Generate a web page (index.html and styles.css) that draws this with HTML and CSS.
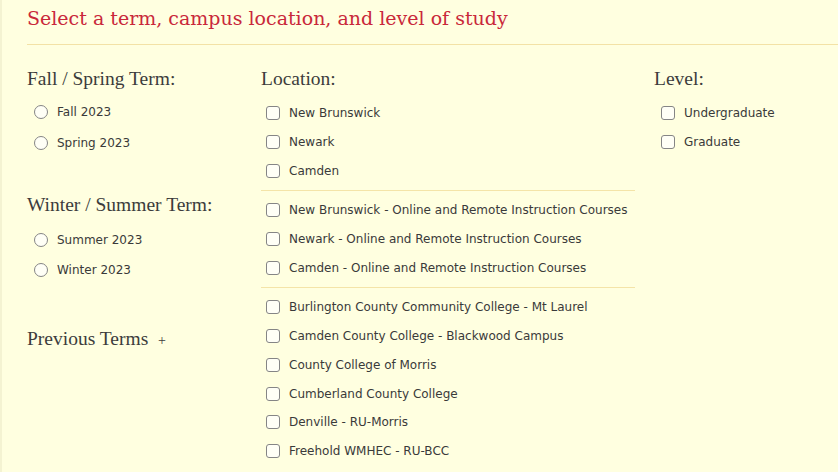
FILE: index.html
```html
<!DOCTYPE html>
<html lang="en">
<head>
<meta charset="utf-8">
<title>Select term</title>
<link rel="stylesheet" href="styles.css">
</head>
<body>
<div class="page">
  <div class="header">
    <h1 class="title">Select a term, campus location, and level of study</h1>
  </div>
  <div class="columns">
    <div class="col col-term">
      <div class="group">
        <div class="group-title">Fall / Spring Term:</div>
        <label class="opt radio-opt"><input type="radio" name="term" class="radio"><span>Fall 2023</span></label>
        <label class="opt radio-opt"><input type="radio" name="term" class="radio"><span>Spring 2023</span></label>
      </div>
      <div class="group group-winter">
        <div class="group-title">Winter / Summer Term:</div>
        <label class="opt radio-opt"><input type="radio" name="term" class="radio"><span>Summer 2023</span></label>
        <label class="opt radio-opt"><input type="radio" name="term" class="radio"><span>Winter 2023</span></label>
      </div>
      <div class="group group-prev">
        <div class="group-title">Previous Terms <span class="plus">+</span></div>
      </div>
    </div>
    <div class="col col-loc">
      <div class="group-title">Location:</div>
      <div class="loc-set">
        <label class="opt"><input type="checkbox" class="check"><span>New Brunswick</span></label>
        <label class="opt"><input type="checkbox" class="check"><span>Newark</span></label>
        <label class="opt"><input type="checkbox" class="check"><span>Camden</span></label>
      </div>
      <div class="loc-set">
        <label class="opt"><input type="checkbox" class="check"><span>New Brunswick - Online and Remote Instruction Courses</span></label>
        <label class="opt"><input type="checkbox" class="check"><span>Newark - Online and Remote Instruction Courses</span></label>
        <label class="opt"><input type="checkbox" class="check"><span>Camden - Online and Remote Instruction Courses</span></label>
      </div>
      <div class="loc-set last">
        <label class="opt"><input type="checkbox" class="check"><span>Burlington County Community College - Mt Laurel</span></label>
        <label class="opt"><input type="checkbox" class="check"><span>Camden County College - Blackwood Campus</span></label>
        <label class="opt"><input type="checkbox" class="check"><span>County College of Morris</span></label>
        <label class="opt"><input type="checkbox" class="check"><span>Cumberland County College</span></label>
        <label class="opt"><input type="checkbox" class="check"><span>Denville - RU-Morris</span></label>
        <label class="opt"><input type="checkbox" class="check"><span>Freehold WMHEC - RU-BCC</span></label>
        <label class="opt"><input type="checkbox" class="check"><span>Mays Landing - RU-ACCC</span></label>
      </div>
    </div>
    <div class="col col-level">
      <div class="group-title">Level:</div>
      <label class="opt"><input type="checkbox" class="check lvl"><span>Undergraduate</span></label>
      <label class="opt"><input type="checkbox" class="check lvl"><span>Graduate</span></label>
    </div>
  </div>
</div>
</body>
</html>
```
FILE: styles.css
```css
html, body {
  margin: 0;
  padding: 0;
}
body {
  background: #ffffe0;
  height: 472px;
  overflow: hidden;
}
.page {
  border-left: 2px solid #f4f3d2;
  min-height: 472px;
}
.header {
  margin-left: 25px;
  height: 45px;
  border-bottom: 1px solid #f3e2a6;
  box-sizing: border-box;
}
.title {
  margin: 0;
  padding-top: 6px;
  font-family: "DejaVu Serif", Georgia, serif;
  font-weight: normal;
  font-size: 19px;
  line-height: 24px;
  color: #c9283a;
}
.columns {
  display: flex;
  padding-left: 25px;
  padding-top: 24px;
}
.col-term { width: 234px; }
.col-loc { width: 374px; margin-right: 19px; }
.col-level { flex: 1; }
.group-title {
  font-family: "Liberation Serif", "Times New Roman", serif;
  font-size: 19.5px;
  line-height: 20px;
  color: #3c3c3c;
  margin-bottom: 10px;
}
.col-term .group-title { margin-bottom: 8px; }
.col-term .group-winter .group-title { margin-bottom: 9.5px; }
.plus {
  font-size: 14px;
  margin-left: 5px;
}
.opt {
  display: flex;
  align-items: center;
  height: 28.7px;
  font-family: "DejaVu Sans", Tahoma, sans-serif;
  font-size: 12px;
  color: #3a3a3a;
}
.radio-opt { height: 30.5px; }
.check, .radio {
  appearance: none;
  -webkit-appearance: none;
  margin: 0 9px 0 5px;
  width: 14px;
  height: 14px;
  border: 1px solid #858585;
  background: #fffff6;
  box-sizing: border-box;
  flex: none;
}
.check { border-radius: 3px; }
.check.lvl { margin-left: 7px; }
.radio { border-radius: 50%; margin-left: 7px; }
.group-winter { margin-top: 37px; }
.group-prev { margin-top: 43.5px; }
.loc-set {
  border-bottom: 1px solid #f4e4a8;
  padding-bottom: 5px;
  margin-bottom: 5px;
}
.loc-set.last { border-bottom: none; }
```
